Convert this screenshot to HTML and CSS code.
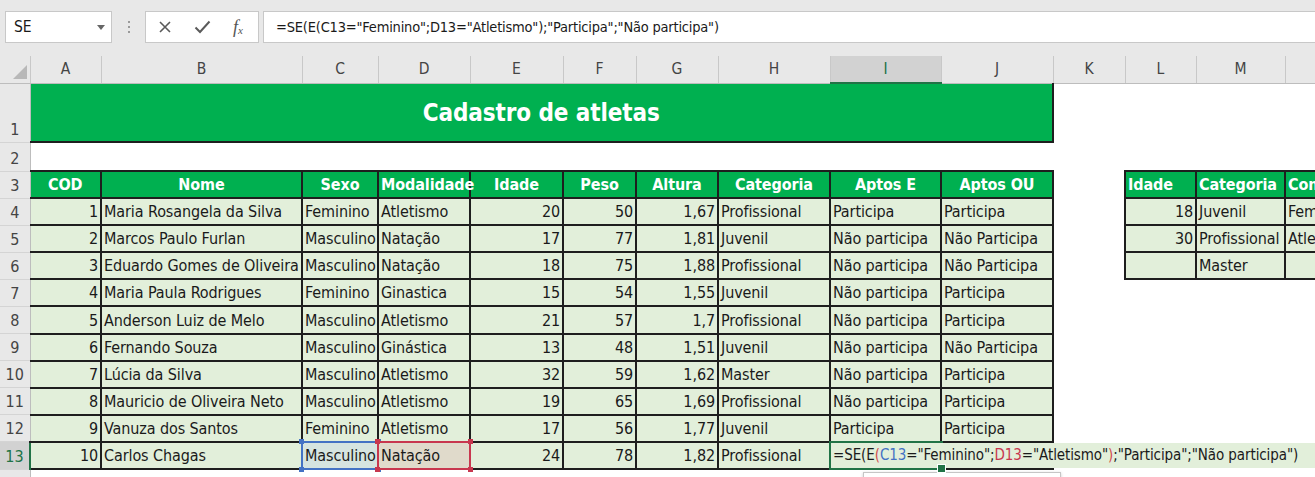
FILE: index.html
```html
<!DOCTYPE html>
<html lang="pt-br">
<head>
    <meta charset="UTF-8">
    <title>Cadastro de atletas - Excel</title>
    <link rel="stylesheet" href="styles.css">
</head>
<body>

<div class="toolbar">
    <div class="namebox"><span>SE</span><span class="caret"></span></div>
    <div class="grip"><i></i><i></i><i></i></div>
    <div class="fxbox">
        <svg width="14" height="14" viewBox="0 0 14 14"><path d="M2 2 L12 12 M12 2 L2 12" stroke="#5a5a5a" stroke-width="1.6" fill="none"/></svg>
        <svg width="17" height="14" viewBox="0 0 17 14"><path d="M1.5 7.5 L6 12 L15.5 1.5" stroke="#5a5a5a" stroke-width="2" fill="none"/></svg>
        <span class="fx">f<sub>x</sub></span>
    </div>
    <div class="formula">=SE(E(C13="Feminino";D13="Atletismo");"Participa";"Não participa")</div>
</div>

<div class="sheet">
<table class="grid">
    <colgroup>
        <col style="width:30px"><col style="width:71px"><col style="width:201px"><col style="width:76px">
        <col style="width:92px"><col style="width:93px"><col style="width:73px"><col style="width:82px">
        <col style="width:112px"><col style="width:111px"><col style="width:112px"><col style="width:72px">
        <col style="width:71px"><col style="width:89px"><col style="width:90px">
    </colgroup>
    <thead>
        <tr class="colhead">
            <th class="corner"><span class="tri"></span></th>
            <th>A</th><th>B</th><th>C</th><th>D</th><th>E</th><th>F</th><th>G</th>
            <th>H</th><th class="sel">I</th><th>J</th><th>K</th><th>L</th><th>M</th><th></th>
        </tr>
    </thead>
    <tbody>
        <tr class="r-title">
            <th class="rh">1</th>
            <td colspan="10" class="title">Cadastro de atletas</td>
            <td></td><td></td><td></td><td></td>
        </tr>
        <tr class="r-gap"><th class="rh">2</th><td colspan="14"></td></tr>
        <tr>
            <th class="rh">3</th>
            <td class="hd first">COD</td><td class="hd">Nome</td><td class="hd">Sexo</td><td class="hd">Modalidade</td>
            <td class="hd">Idade</td><td class="hd">Peso</td><td class="hd">Altura</td><td class="hd">Categoria</td>
            <td class="hd">Aptos E</td><td class="hd">Aptos OU</td>
            <td></td>
            <td class="hd left">Idade</td><td class="hd left">Categoria</td><td class="hd left">Competição</td>
        </tr>
        <tr>
            <th class="rh">4</th>
            <td class="b n first">1</td><td class="b">Maria Rosangela da Silva</td><td class="b">Feminino</td><td class="b">Atletismo</td>
            <td class="b n">20</td><td class="b n">50</td><td class="b n">1,67</td><td class="b">Profissional</td>
            <td class="b">Participa</td><td class="b">Participa</td>
            <td></td>
            <td class="b n">18</td><td class="b">Juvenil</td><td class="b">Feminino</td>
        </tr>
        <tr>
            <th class="rh">5</th>
            <td class="b n first">2</td><td class="b">Marcos Paulo Furlan</td><td class="b">Masculino</td><td class="b">Natação</td>
            <td class="b n">17</td><td class="b n">77</td><td class="b n">1,81</td><td class="b">Juvenil</td>
            <td class="b">Não participa</td><td class="b">Não Participa</td>
            <td></td>
            <td class="b n">30</td><td class="b">Profissional</td><td class="b">Atletismo</td>
        </tr>
        <tr>
            <th class="rh">6</th>
            <td class="b n first">3</td><td class="b">Eduardo Gomes de Oliveira</td><td class="b">Masculino</td><td class="b">Natação</td>
            <td class="b n">18</td><td class="b n">75</td><td class="b n">1,88</td><td class="b">Profissional</td>
            <td class="b">Não participa</td><td class="b">Não Participa</td>
            <td></td>
            <td class="b n"></td><td class="b">Master</td><td class="b"></td>
        </tr>
        <tr>
            <th class="rh">7</th>
            <td class="b n first">4</td><td class="b">Maria Paula Rodrigues</td><td class="b">Feminino</td><td class="b">Ginastica</td>
            <td class="b n">15</td><td class="b n">54</td><td class="b n">1,55</td><td class="b">Juvenil</td>
            <td class="b">Não participa</td><td class="b">Participa</td>
            <td></td><td></td><td></td><td></td>
        </tr>
        <tr>
            <th class="rh">8</th>
            <td class="b n first">5</td><td class="b">Anderson Luiz de Melo</td><td class="b">Masculino</td><td class="b">Atletismo</td>
            <td class="b n">21</td><td class="b n">57</td><td class="b n">1,7</td><td class="b">Profissional</td>
            <td class="b">Não participa</td><td class="b">Participa</td>
            <td></td><td></td><td></td><td></td>
        </tr>
        <tr>
            <th class="rh">9</th>
            <td class="b n first">6</td><td class="b">Fernando Souza</td><td class="b">Masculino</td><td class="b">Ginástica</td>
            <td class="b n">13</td><td class="b n">48</td><td class="b n">1,51</td><td class="b">Juvenil</td>
            <td class="b">Não participa</td><td class="b">Não Participa</td>
            <td></td><td></td><td></td><td></td>
        </tr>
        <tr>
            <th class="rh">10</th>
            <td class="b n first">7</td><td class="b">Lúcia da Silva</td><td class="b">Masculino</td><td class="b">Atletismo</td>
            <td class="b n">32</td><td class="b n">59</td><td class="b n">1,62</td><td class="b">Master</td>
            <td class="b">Não participa</td><td class="b">Participa</td>
            <td></td><td></td><td></td><td></td>
        </tr>
        <tr>
            <th class="rh">11</th>
            <td class="b n first">8</td><td class="b">Mauricio de Oliveira Neto</td><td class="b">Masculino</td><td class="b">Atletismo</td>
            <td class="b n">19</td><td class="b n">65</td><td class="b n">1,69</td><td class="b">Profissional</td>
            <td class="b">Não participa</td><td class="b">Participa</td>
            <td></td><td></td><td></td><td></td>
        </tr>
        <tr>
            <th class="rh">12</th>
            <td class="b n first">9</td><td class="b">Vanuza dos Santos</td><td class="b">Feminino</td><td class="b">Atletismo</td>
            <td class="b n">17</td><td class="b n">56</td><td class="b n">1,77</td><td class="b">Juvenil</td>
            <td class="b">Participa</td><td class="b">Participa</td>
            <td></td><td></td><td></td><td></td>
        </tr>
        <tr>
            <th class="rh sel">13</th>
            <td class="b n first">10</td><td class="b">Carlos Chagas</td>
            <td class="b ref ref-c">Masculino</td><td class="b ref ref-d">Natação</td>
            <td class="b n">24</td><td class="b n">78</td><td class="b n">1,82</td><td class="b">Profissional</td>
            <td class="b active">
                <div class="editor">=SE(E<span class="paren">(</span><span class="rc">C13</span>="Feminino";<span class="rd">D13</span>="Atletismo"<span class="paren">)</span>;"Participa";"Não participa")</div>
                <div class="tip">SE(teste_lógico; [valor_se_verdadeiro]; [valor_se_falso])</div>
            </td>
            <td class="b"></td>
            <td></td><td></td><td></td><td></td>
        </tr>
        <tr class="r-last"><th class="rh">14</th><td colspan="14"></td></tr>
    </tbody>
</table>
</div>

</body>
</html>
```

FILE: styles.css
```css
* { box-sizing: border-box; }
body { margin: 0; width: 1315px; height: 477px; overflow: hidden; background: #fff; font-family: "DejaVu Sans Condensed", "Liberation Sans Narrow", "Liberation Sans", sans-serif; color: #1a1a1a; }

/* barra de formulas */
.toolbar { height: 56px; background: #e8e8e8; display: flex; align-items: flex-start; padding: 11px 0 0 5px; }
.namebox { width: 107px; height: 32px; background: #fff; border: 1px solid #c8c8c8; display: flex; align-items: center; justify-content: space-between; padding: 0 6px 0 8px; font-size: 15.5px; }
.caret { width: 0; height: 0; border-left: 4px solid transparent; border-right: 4px solid transparent; border-top: 5px solid #666; }
.grip { width: 33px; height: 32px; display: flex; flex-direction: column; align-items: center; justify-content: center; gap: 3px; }
.grip i { display: block; width: 2px; height: 2px; background: #9a9a9a; }
.fxbox { width: 114px; height: 32px; background: #fff; border: 1px solid #c8c8c8; display: flex; align-items: center; gap: 22px; padding-left: 12px; }
.fx { font-family: "Liberation Serif", serif; font-style: italic; font-size: 18px; color: #555; }
.fx sub { font-size: 11px; vertical-align: -1px; }
.formula { flex: 1; margin-left: 4px; height: 32px; background: #fff; border: 1px solid #c8c8c8; border-right: none; padding-left: 12px; display: flex; align-items: center; font-size: 14.5px; letter-spacing: -0.2px; white-space: nowrap; }

/* planilha */
.sheet { width: 1315px; overflow: hidden; }
.grid { border-collapse: collapse; table-layout: fixed; width: 1375px; }
.grid td { padding: 0 2px; font-size: 16px; letter-spacing: -0.1px; white-space: nowrap; vertical-align: middle; height: 27.1px; }

.colhead th { height: 27px; background: #e8e8e8; font-weight: normal; font-size: 15.5px; color: #444; border-right: 1px solid #c8c8c8; border-bottom: 1px solid #bdbdbd; }
.colhead th.sel { background: #d2d2d2; color: #217346; border-bottom: 2px solid #217346; }
.corner { position: relative; }
.tri { position: absolute; right: 3px; bottom: 4px; width: 0; height: 0; border-left: 14px solid transparent; border-bottom: 14px solid #b8b8b8; }

.rh { background: #e8e8e8; font-weight: normal; font-size: 16px; color: #444; border-right: 1px solid #bdbdbd; border-bottom: 1px solid #d4d4d4; text-align: center; vertical-align: bottom; padding: 0 0 3px; }
.rh.sel { background: #d2d2d2; color: #217346; border-right: 2px solid #217346; }

.r-title th, .r-title td { height: 59px; }
.r-gap th, .r-gap td { height: 29px; }

.title { background: #00b050; color: #fff; font-weight: bold; font-size: 24px !important; text-align: center; border-right: 2px solid #1e1e1e; border-bottom: 2px solid #1e1e1e; }
.hd { background: #00b050; color: #fff; font-weight: bold; text-align: center; border: 2px solid #1e1e1e; }
.hd.left { text-align: left; }
.b { background: #e2efda; border: 2px solid #1e1e1e; }
.n { text-align: right; }
.first { border-left: none; }

/* referencias da formula em edicao */
.ref { position: relative; }
.ref::before { content: ""; position: absolute; left: -2px; right: -2px; top: -2px; bottom: -2px; border: 2px solid var(--rc); }
.ref::after { content: ""; position: absolute; left: -4px; right: -4px; top: -4px; bottom: -4px;
    background: linear-gradient(var(--rc), var(--rc)) left top / 5px 5px no-repeat,
                linear-gradient(var(--rc), var(--rc)) right top / 5px 5px no-repeat,
                linear-gradient(var(--rc), var(--rc)) left bottom / 5px 5px no-repeat,
                linear-gradient(var(--rc), var(--rc)) right bottom / 5px 5px no-repeat; }
.ref-c { --rc: #4472c4; background: #d6e4e0; }
.ref-d { --rc: #c8374f; background: #e0dacb; }

.active { position: relative; }
.active::after { content: ""; position: absolute; left: -2px; top: -2px; bottom: -2px; width: 112px; border: 2px solid #217346; border-right: none; z-index: 3; }
.active::before { content: ""; position: absolute; left: 106px; bottom: -5px; width: 7px; height: 7px; background: #217346; border: 1px solid #fff; z-index: 4; }
.editor { position: absolute; left: 0; top: 0; bottom: 0; width: 486px; background: #e2efda; z-index: 2; padding-left: 2px; display: flex; align-items: center; white-space: nowrap; font-size: 15px; letter-spacing: -0.1px; }
.paren { color: #d4504e; }
.rc { color: #4472c4; }
.rd { color: #c8374f; }
.tip { position: absolute; left: 32px; top: calc(100% + 4px); width: 198px; height: 22px; background: #fff; border: 1px solid #c6c6c6; box-shadow: 0 1px 3px rgba(0,0,0,0.2); font-size: 12px; color: #777; padding: 3px 5px; white-space: nowrap; overflow: hidden; z-index: 3; }
```
